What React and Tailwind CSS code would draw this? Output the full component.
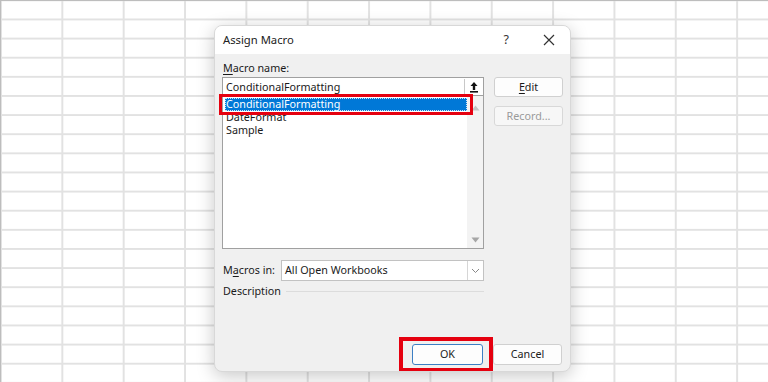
import React from 'react';

const font = { fontFamily: '"Noto Sans", "Open Sans", sans-serif' };

function UpArrow() {
  return (
    <svg width="10" height="12" viewBox="0 0 10 12">
      <path d="M5 1 L1.5 5 H3.8 V9 H6.2 V5 H8.5 Z" fill="#111" />
      <rect x="1" y="10" width="8" height="1.6" fill="#111" />
    </svg>
  );
}

function Tri({ down }) {
  return (
    <svg width="9" height="6" viewBox="0 0 9 6">
      {down ? <path d="M0.5 0.5 H8.5 L4.5 5.5 Z" fill="#a6a6a6" /> : <path d="M0.5 5.5 H8.5 L4.5 0.5 Z" fill="#c4c4c4" />}
    </svg>
  );
}

export default function App() {
  return (
    <div
      className="relative w-[768px] h-[382px] overflow-hidden bg-white border-t border-l border-[#bdbdbd] bg-[linear-gradient(to_right,#e2e2e2_2px,transparent_2px),linear-gradient(to_bottom,#e2e2e2_2px,transparent_2px)] bg-[size:61.35px_19.13px] bg-[position:-1px_17.5px]"
      style={font}
    >
      <div className="absolute left-[213px] top-[24px] w-[357px] h-[347px] rounded-[8px] bg-[#f0f0f0] shadow-[0_4px_18px_rgba(0,0,0,0.22)] overflow-hidden border border-[#d8d8d8] text-[10.75px] text-[#1a1a1a]">
        <div className="h-[28px] bg-white flex items-center pl-[8px] pr-[15px]">
          <span className="text-[11.25px] text-[#222]">Assign Macro</span>
          <span className="ml-auto mr-[34px] text-[12.5px] text-[#333]">?</span>
          <svg width="12" height="12" viewBox="0 0 12 12">
            <path d="M1 1 L11 11 M11 1 L1 11" stroke="#333" strokeWidth="1.2" />
          </svg>
        </div>

        <div className="pl-[7px] pt-[6px]">
          <div className="h-[16px] leading-[16px] pl-[1px]">
            <span className="underline underline-offset-2">M</span>acro name:
          </div>
          <div className="flex mt-[1px]">
            <div className="w-[262px] flex flex-col">
              <div className="h-[18px] bg-white border border-[#a0a0a0] border-b-0 flex items-center">
                <span className="pl-[3px] leading-[16px]">ConditionalFormatting</span>
                <div className="ml-auto w-[19px] h-[16px] border-l border-[#c8c8c8] flex items-center justify-center">
                  <UpArrow />
                </div>
              </div>
              <div className="h-[154px] bg-white border border-[#a0a0a0] flex">
                <div className="flex-1 flex flex-col pt-[2px] pl-[2px] leading-[13px]">
                  <div className="h-[13px] bg-[#0078d7] text-white pl-[1px] outline-1 outline-dotted outline-[#cfe4f7] -outline-offset-1">ConditionalFormatting</div>
                  <div className="h-[13px] pl-[1px]">DateFormat</div>
                  <div className="h-[13px] pl-[1px]">Sample</div>
                </div>
                <div className="w-[16px] bg-[#f3f3f3] flex flex-col items-center justify-between pt-[9px] pb-[5px]">
                  <Tri />
                  <Tri down />
                </div>
              </div>
            </div>
            <div className="ml-[10px] w-[69px] flex flex-col gap-[9px]">
              <div className="h-[20px] bg-[#fdfdfd] border border-[#d0d0d0] rounded-[3px] flex items-center justify-center">
                <span><span className="underline underline-offset-2">E</span>dit</span>
              </div>
              <div className="h-[20px] bg-[#f7f7f7] border border-[#d8d8d8] rounded-[3px] flex items-center justify-center text-[#9a9a9a]">
                Record...
              </div>
            </div>
          </div>

          <div className="flex items-center mt-[11px] w-[262px]">
            <div className="w-[59px] pl-[1px]">
              M<span className="underline underline-offset-2">a</span>cros in:
            </div>
            <div className="flex-1 h-[21px] bg-white border border-[#c2c2c2] flex items-center">
              <span className="pl-[3px]">All Open Workbooks</span>
              <div className="ml-auto w-[16px] h-full border-l border-[#d6d6d6] flex items-center justify-center">
                <svg width="9" height="6" viewBox="0 0 9 6">
                  <path d="M1 1 L4.5 4.5 L8 1" stroke="#888" strokeWidth="1" fill="none" />
                </svg>
              </div>
            </div>
          </div>

          <div className="flex items-center mt-[2px] w-[262px] h-[16px]">
            <span className="pl-[1px]">Description</span>
            <div className="flex-1 ml-[5px] h-px bg-[#dcdcdc]" />
          </div>

          <div className="flex justify-end mt-[45px] pr-[8px] gap-[10px]">
            <div className="w-[71px] h-[21px] bg-[#fdfdfd] border border-[#3c7fc4] rounded-[3px] flex items-center justify-center">OK</div>
            <div className="w-[69px] h-[21px] bg-[#fdfdfd] border border-[#d0d0d0] rounded-[3px] flex items-center justify-center">Cancel</div>
          </div>
        </div>

        <div className="absolute left-[4px] top-[68px] w-[254px] h-[21px] border-[3px] border-[#e5000f]" />
        <div className="absolute left-[184px] top-[311px] w-[94px] h-[35px] border-[4px] border-[#e5000f]" />
      </div>
    </div>
  );
}
